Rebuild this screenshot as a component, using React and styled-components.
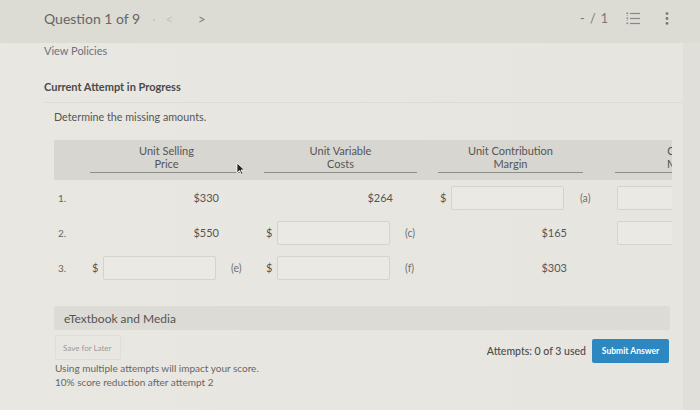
import React from 'react';
import styled, { createGlobalStyle } from 'styled-components';

const Global = createGlobalStyle`
  html, body { margin: 0; padding: 0; }
  body {
    background: #e6e4de;
    font-family: Lato, "Open Sans", sans-serif;
    color: #555;
  }
`;

const Page = styled.div`
  width: 700px;
  height: 410px;
  overflow: hidden;
  position: relative;
  background: linear-gradient(90deg, #e9e7e2 0%, #e7e5df 97.5%, #e1dfd9 97.6%);
`;

const TopBar = styled.header`
  height: 43px;
  display: flex;
  align-items: center;
  padding: 0 31px 0 44px;
  background: #dcdbd4;
  box-sizing: border-box;
`;

const Title = styled.div`
  font-size: 14px;
  color: #666;
  margin-top: -6px;
`;

const Nav = styled.span`
  font-size: 13px;
  color: ${p => (p.faint ? '#c4c3bd' : '#777')};
  margin-left: ${p => p.gap}px;
  margin-top: -6px;
`;

const Spacer = styled.div`
  flex: 1;
`;

const TopTools = styled.div`
  display: flex;
  align-items: center;
  margin-top: -6px;
  color: #777;
`;

const Score = styled.span`
  font-size: 12.5px;
  letter-spacing: 1px;
  margin-right: 17px;
`;

const KebabWrap = styled.span`
  margin-left: 25px;
  display: flex;
`;

const Main = styled.main`
  margin-left: 44px;
  width: 639px;
`;

const Link = styled.div`
  font-size: 11px;
  color: #6d717a;
  padding-top: 1px;
`;

const Attempt = styled.div`
  margin-top: 23px;
  font-size: 11px;
  font-weight: 700;
  color: #4a4a4a;
  padding-bottom: 9px;
  border-bottom: 1px solid #dddbd5;
`;

const Question = styled.section`
  padding: 7px 0 0 10px;
  width: 618px;
`;

const Prompt = styled.div`
  font-size: 10.75px;
  color: #555;
`;

const TableWrap = styled.div`
  margin-top: 17px;
  width: 618px;
  overflow: hidden;
  position: relative;
`;

const Grid = styled.div`
  display: grid;
  grid-template-columns: 36px 13px 113px 48px 13px 113px 48px 13px 113px 40px 13px 113px 40px;
  grid-template-rows: 40px;
  grid-auto-rows: 35px;
  width: 716px;
  font-size: 11px;
  color: #555;
`;

const HeadBand = styled.div`
  grid-column: 1 / -1;
  grid-row: 1;
  background: #d7d6d0;
`;

const HeadCell = styled.div`
  grid-row: 1;
  grid-column: ${p => p.col} / span 3;
  margin: 0 21px 7px ${p => p.inset || 0}px;
  padding: 0 0 2px ${p => p.shift || 0}px;
  border-bottom: 1px solid #8d8d8a;
  display: flex;
  align-items: flex-end;
  justify-content: center;
  text-align: center;
  font-size: 11px;
  line-height: 13px;
  color: #555;
  height: 33px;
  box-sizing: border-box;
  z-index: 1;
  white-space: nowrap;
`;

const RowNum = styled.div`
  display: flex;
  align-items: center;
  padding-left: 4px;
  font-size: 10px;
  color: #666;
`;

const Cell = styled.div`
  display: flex;
  align-items: center;
  justify-content: ${p => (p.right ? 'flex-end' : 'flex-start')};
  padding-left: ${p => p.pad || 0}px;
  margin-right: ${p => p.pull || 0}px;
  font-size: ${p => (p.small ? 10.5 : 11)}px;
  color: ${p => (p.small ? '#707070' : '#555')};
`;

const Box = styled.div`
  height: 24px;
  width: 113px;
  box-sizing: border-box;
  border: 1px solid #d5d3cd;
  border-radius: 2px;
  background: #ebe9e4;
`;

const Media = styled.div`
  margin-top: 21px;
  height: 24px;
  width: 616px;
  background: #dddbd5;
  border-radius: 3px;
  display: flex;
  align-items: center;
  padding-left: 10px;
  box-sizing: border-box;
  font-size: 12px;
  color: #555;
`;

const Footer = styled.div`
  display: flex;
  align-items: flex-start;
  width: 614px;
  margin-top: 5px;
  padding-left: 1px;
`;

const Notes = styled.div`
  display: flex;
  flex-direction: column;
  align-items: flex-start;
`;

const SaveButton = styled.div`
  height: 25px;
  padding: 0 9px 0 7px;
  border: 1px solid #dfddd8;
  border-radius: 2px;
  display: flex;
  align-items: center;
  font-size: 8px;
  color: #9a9a96;
  box-sizing: border-box;
`;

const Note = styled.div`
  font-size: 10px;
  color: #666;
  line-height: 14px;
  margin-top: ${p => p.top || 0}px;
`;

const Actions = styled.div`
  margin-left: auto;
  margin-top: 4px;
  display: flex;
  align-items: center;
  gap: 6px;
`;

const Used = styled.span`
  font-size: 10.5px;
  color: #4b4b4b;
  font-weight: 500;
`;

const Submit = styled.button`
  height: 24px;
  width: 77px;
  border: none;
  border-radius: 2px;
  background: #2d87c1;
  color: #fff;
  font-family: Lato, sans-serif;
  font-weight: 700;
  font-size: 8.5px;
  padding: 0;
`;

const Pointer = styled.svg`
  position: absolute;
  left: 182px;
  top: 22px;
  z-index: 2;
`;

const ListIcon = () => (
  <svg width="14" height="13" viewBox="0 0 14 13">
    {[1.5, 6.5, 11.5].map(y => (
      <g key={y}>
        <rect x="0.5" y={y - 1} width="1.6" height="1.6" fill="#888" />
        <rect x="4" y={y - 0.6} width="10" height="1.2" fill="#888" />
      </g>
    ))}
    <rect x="0.8" y="3" width="1" height="1" fill="#aaa" />
    <rect x="0.8" y="8" width="1" height="1" fill="#aaa" />
  </svg>
);

const Kebab = () => (
  <svg width="4" height="13" viewBox="0 0 4 13">
    <circle cx="2" cy="1.6" r="1.4" fill="#777" />
    <circle cx="2" cy="6.5" r="1.4" fill="#777" />
    <circle cx="2" cy="11.4" r="1.4" fill="#777" />
  </svg>
);

const rows = [
  ['1.', [null, '$330', null], [null, '$264', null], ['$', 'box', '(a)'], [null, 'box', null]],
  ['2.', [null, '$550', null], ['$', 'box', '(c)'], [null, '$165', null], [null, 'box', null]],
  ['3.', ['$', 'box', '(e)'], ['$', 'box', '(f)'], [null, '$303', null], [null, null, null]],
];

export default function App() {
  return (
    <Page>
      <Global />
      <TopBar>
        <Title>Question 1 of 9</Title>
        <Nav faint gap={12}>·</Nav>
        <Nav faint gap={10}>&lt;</Nav>
        <Nav gap={25}>&gt;</Nav>
        <Spacer />
        <TopTools>
          <Score>- / 1</Score>
          <ListIcon />
          <KebabWrap><Kebab /></KebabWrap>
        </TopTools>
      </TopBar>
      <Main>
        <Link>View Policies</Link>
        <Attempt>Current Attempt in Progress</Attempt>
        <Question>
          <Prompt>Determine the missing amounts.</Prompt>
          <TableWrap>
            <Grid>
              <HeadBand />
              <HeadCell col={2}>Unit Selling<br />Price</HeadCell>
              <HeadCell col={5}>Unit Variable<br />Costs</HeadCell>
              <HeadCell col={8}>Unit Contribution<br />Margin</HeadCell>
              <HeadCell col={11} inset={11} shift={32}>Contribution<br />Margin Ratio</HeadCell>
              {rows.map(([num, ...groups]) => (
                <React.Fragment key={num}>
                  <RowNum>{num}</RowNum>
                  {groups.map(([dollar, val, tag], i) => (
                    <React.Fragment key={i}>
                      <Cell pad={2}>{dollar}</Cell>
                      {val === 'box' ? (
                        <Cell><Box /></Cell>
                      ) : (
                        <Cell right pull={-3}>{val}</Cell>
                      )}
                      <Cell small pad={i === 2 ? 16 : 15}>{tag}</Cell>
                    </React.Fragment>
                  ))}
                </React.Fragment>
              ))}
            </Grid>
            <Pointer width="9" height="13" viewBox="0 0 9 13">
              <path d="M1 1 L1 11 L3.5 8.5 L5.5 12.5 L7 11.8 L5 8 L8.5 8 Z" fill="#222" stroke="#fff" strokeWidth="0.8" />
            </Pointer>
          </TableWrap>
          <Media>eTextbook and Media</Media>
          <Footer>
            <Notes>
              <SaveButton>Save for Later</SaveButton>
              <Note top={1}>Using multiple attempts will impact your score.</Note>
              <Note>10% score reduction after attempt 2</Note>
            </Notes>
            <Actions>
              <Used>Attempts: 0 of 3 used</Used>
              <Submit>Submit Answer</Submit>
            </Actions>
          </Footer>
        </Question>
      </Main>
    </Page>
  );
}
